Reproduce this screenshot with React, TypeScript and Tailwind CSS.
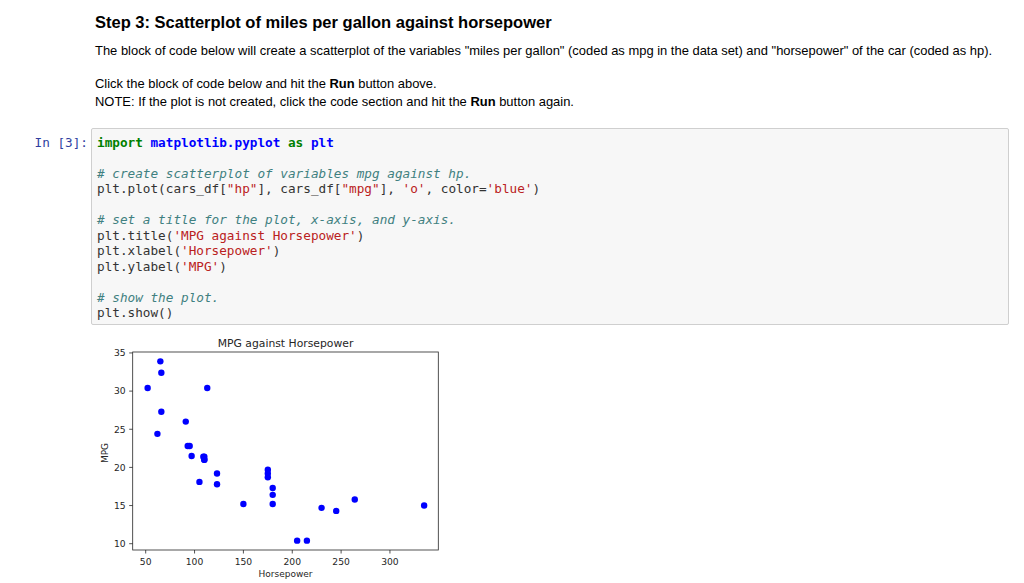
import React from "react";

const pts: [number, number][] = [
  [65, 33.9], [66, 32.4], [52, 30.4], [113, 30.4], [66, 27.3], [91, 26.0], [62, 24.4],
  [93, 22.8], [95, 22.8], [97, 21.5], [110, 21.0], [110, 21.0], [110, 21.4], [109, 21.4],
  [105, 18.1], [123, 19.2], [123, 17.8], [150, 15.2], [175, 19.7], [175, 19.2], [175, 18.7],
  [180, 17.3], [180, 16.4], [180, 15.2], [205, 10.4], [215, 10.4], [230, 14.7], [245, 14.3],
  [264, 15.8], [335, 15.0],
];

const X0 = 41.7, X1 = 347.3, Y0 = 21, Y1 = 219;
const px = (v: number) => 54.7 + (v - 50) * 0.977;
const py = (v: number) => 212.7 - (v - 10) * 7.63;

function Plot() {
  const font = "'DejaVu Sans', sans-serif";
  return (
    <svg width="360" height="252" viewBox="0 0 360 252" className="block">
      <text x={194.5} y={15.5} fontSize="10.8" fill="#262626" textAnchor="middle" fontFamily={font}>
        MPG against Horsepower
      </text>
      <rect x={X0} y={Y0} width={X1 - X0} height={Y1 - Y0} fill="#fff" stroke="#262626" strokeWidth="0.8" />
      {[10, 15, 20, 25, 30, 35].map((v) => (
        <g key={v}>
          <line x1={X0 - 3.5} x2={X0} y1={py(v)} y2={py(v)} stroke="#262626" strokeWidth="0.8" />
          <text x={X0 - 7} y={py(v) + 3.3} fontSize="9.2" fill="#262626" textAnchor="end" fontFamily={font}>
            {v}
          </text>
        </g>
      ))}
      {[50, 100, 150, 200, 250, 300].map((v) => (
        <g key={v}>
          <line x1={px(v)} x2={px(v)} y1={Y1} y2={Y1 + 3.5} stroke="#262626" strokeWidth="0.8" />
          <text x={px(v)} y={Y1 + 14.5} fontSize="9.2" fill="#262626" textAnchor="middle" fontFamily={font}>
            {v}
          </text>
        </g>
      ))}
      <text x={194.5} y={246} fontSize="9" fill="#262626" textAnchor="middle" fontFamily={font}>
        Horsepower
      </text>
      <text
        x={0}
        y={0}
        fontSize="9"
        fill="#262626"
        textAnchor="middle"
        fontFamily={font}
        transform="translate(17 122) rotate(-90)"
      >
        MPG
      </text>
      {pts.map(([h, m], i) => (
        <circle key={i} cx={px(h)} cy={py(m)} r={3.2} fill="#0000ff" />
      ))}
    </svg>
  );
}

const K = ({ children }: { children: React.ReactNode }) => (
  <span className="font-bold text-[#008000]">{children}</span>
);
const N = ({ children }: { children: React.ReactNode }) => (
  <span className="font-bold text-[#0000ff]">{children}</span>
);
const C = ({ children }: { children: React.ReactNode }) => (
  <span className="italic text-[#408080]">{children}</span>
);
const S = ({ children }: { children: React.ReactNode }) => (
  <span className="text-[#ba2121]">{children}</span>
);

export default function App() {
  return (
    <div className="w-[1024px] h-[583px] bg-white overflow-hidden text-black">
      <div className="flex flex-col">
        {/* markdown cell */}
        <div className="pl-[95px] pt-[12px] font-['Liberation_Sans',Arial,sans-serif]">
          <h2 className="text-[16.5px] leading-[20px] font-bold text-black">
            Step 3: Scatterplot of miles per gallon against horsepower
          </h2>
          <p className="mt-[10px] text-[12.95px] leading-[18px]">
            The block of code below will create a scatterplot of the variables "miles per gallon" (coded as mpg in the data set) and "horsepower" of the car (coded as hp).
          </p>
          <p className="mt-[15px] text-[12.95px] leading-[18px]">
            Click the block of code below and hit the <b>Run</b> button above.
            <br />
            NOTE: If the plot is not created, click the code section and hit the <b>Run</b> button again.
          </p>
        </div>

        {/* code cell */}
        <div className="flex mt-[17px]">
          <div className="w-[91px] shrink-0 pr-[3px] pt-[7px] text-right font-['DejaVu_Sans_Mono',monospace] text-[12.7px] leading-[15.45px] text-[#303f9f]">
            In [3]:
          </div>
          <div className="w-[918px] h-[197px] border border-[#cfcfcf] rounded-[2px] bg-[#f7f7f7] pl-[5px] pt-[6px]">
            <pre className="font-['DejaVu_Sans_Mono',monospace] text-[12.7px] leading-[15.45px] text-[#333]">
              <K>import</K> <N>matplotlib.pyplot</N> <K>as</K> <N>plt</N>
              {"\n\n"}
              <C># create scatterplot of variables mpg against hp.</C>
              {"\n"}plt.plot(cars_df[<S>"hp"</S>], cars_df[<S>"mpg"</S>], <S>'o'</S>, color=<S>'blue'</S>)
              {"\n\n"}
              <C># set a title for the plot, x-axis, and y-axis.</C>
              {"\n"}plt.title(<S>'MPG against Horsepower'</S>)
              {"\n"}plt.xlabel(<S>'Horsepower'</S>)
              {"\n"}plt.ylabel(<S>'MPG'</S>)
              {"\n\n"}
              <C># show the plot.</C>
              {"\n"}plt.show()
            </pre>
          </div>
        </div>

        {/* output */}
        <div className="flex mt-[6px]">
          <div className="w-[91px] shrink-0" />
          <Plot />
        </div>
      </div>
    </div>
  );
}
